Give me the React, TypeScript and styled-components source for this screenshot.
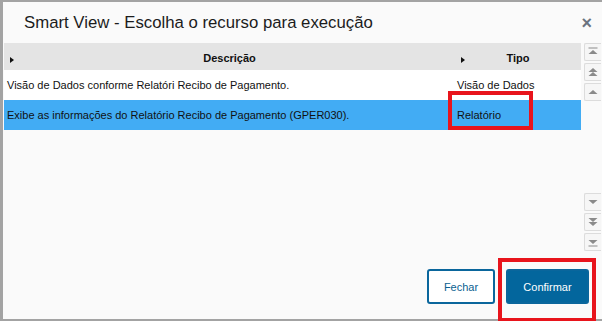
import React from "react";
import styled, { createGlobalStyle } from "styled-components";

const GlobalStyle = createGlobalStyle`
  html, body {
    margin: 0;
    padding: 0;
    background: #ffffff;
    font-family: "Liberation Sans", Arial, sans-serif;
  }
`;

const Dialog = styled.div`
  width: 599px;
  height: 317px;
  display: flex;
  flex-direction: column;
  background: #fafafa;
  border-top: 2px solid #a3a3a3;
  border-left: 3px solid #a3a3a3;
  border-bottom: 2px solid #a3a3a3;
`;

const TitleBar = styled.div`
  height: 41px;
  display: flex;
  align-items: center;
  justify-content: space-between;
  padding: 0 10px 0 21px;
  .title {
    font-size: 16.75px;
    color: #1c1c1c;
    margin-top: 1px;
  }
  .close {
    font-size: 18px;
    font-weight: bold;
    color: #6b7380;
    border: none;
    background: transparent;
    padding: 0;
    line-height: 1;
  }
`;

const Body = styled.div`
  display: flex;
  gap: 3px;
  padding-left: 1px;
  flex: 1;
`;

const Grid = styled.div`
  width: 577px;
  display: flex;
  flex-direction: column;
`;

const Row = styled.div<{ $kind: "head" | "plain" | "selected" }>`
  display: grid;
  grid-template-columns: 451px 126px;
  height: ${(p) => (p.$kind === "head" ? "27px" : "30px")};
  align-items: center;
  font-size: 11px;
  color: #111;
  background: ${(p) =>
    p.$kind === "head" ? "#e4e4e4" : p.$kind === "selected" ? "#42acf4" : "#ffffff"};
  font-weight: ${(p) => (p.$kind === "head" ? "bold" : "normal")};
`;

const HeadCell = styled.div`
  position: relative;
  text-align: center;
  padding-top: 2px;
  &::before {
    content: "";
    position: absolute;
    left: 6px;
    top: 7px;
    border-left: 4px solid #111;
    border-top: 3.5px solid transparent;
    border-bottom: 3.5px solid transparent;
  }
`;

const Cell = styled.div<{ $pad: number }>`
  position: relative;
  padding-left: ${(p) => p.$pad}px;
  white-space: nowrap;
`;

const Highlight = styled.span`
  position: absolute;
  left: -7px;
  top: -18px;
  width: 77px;
  height: 31px;
  border: 4px solid #e8141c;
  pointer-events: none;
`;

const ScrollColumn = styled.div`
  width: 17px;
  display: flex;
  flex-direction: column;
  gap: 92px;
`;

const ScrollGroup = styled.div`
  display: flex;
  flex-direction: column;
  gap: 2px;
`;

const ScrollButton = styled.div`
  width: 16px;
  height: 16px;
  border: 1px solid #dcdcdc;
  border-right: none;
  border-radius: 2px 0 0 2px;
  background: #f6f6f6;
  display: flex;
  align-items: center;
  justify-content: center;
`;

const Footer = styled.div`
  display: flex;
  justify-content: flex-end;
  align-items: flex-start;
  gap: 11px;
  padding: 0 13px 15px 0;
`;

const Button = styled.button<{ $primary?: boolean }>`
  height: 35px;
  border-radius: 3px;
  font-family: "Liberation Sans", Arial, sans-serif;
  font-size: 11px;
  cursor: pointer;
  border: 2px solid #0a669c;
  background: ${(p) => (p.$primary ? "#03669d" : "#ffffff")};
  color: ${(p) => (p.$primary ? "#ffffff" : "#0a5f91")};
  width: ${(p) => (p.$primary ? "83px" : "68px")};
`;

const ButtonWrap = styled.div`
  position: relative;
`;

const ButtonHighlight = styled.span`
  position: absolute;
  left: -8px;
  top: -11px;
  width: 90px;
  height: 56px;
  border: 4px solid #e8141c;
  pointer-events: none;
`;

type ArrowKind = "top" | "pageUp" | "up" | "down" | "pageDown" | "bottom";

function Arrow({ kind }: { kind: ArrowKind }) {
  const up = kind === "top" || kind === "pageUp" || kind === "up";
  const tri = (y: number) =>
    up ? `M1.5 ${y + 4} L6 ${y} L10.5 ${y + 4} Z` : `M1.5 ${y} L6 ${y + 4} L10.5 ${y} Z`;
  return (
    <svg width="12" height="12" viewBox="0 0 12 12">
      {kind === "top" && <rect x="1.5" y="1.5" width="9" height="1" fill="#8a8a8a" />}
      {kind === "bottom" && <rect x="1.5" y="9.5" width="9" height="1" fill="#8a8a8a" />}
      {(kind === "pageUp" || kind === "pageDown") && (
        <>
          <path d={tri(2)} fill="#8a8a8a" />
          <path d={tri(6)} fill="#8a8a8a" />
        </>
      )}
      {kind === "top" && <path d={tri(4)} fill="#8a8a8a" />}
      {kind === "up" && <path d={tri(4)} fill="#8a8a8a" />}
      {kind === "down" && <path d={tri(4)} fill="#8a8a8a" />}
      {kind === "bottom" && <path d={tri(4)} fill="#8a8a8a" />}
    </svg>
  );
}

const rows = [
  { desc: "Visão de Dados conforme Relatóri Recibo de Pagamento.", tipo: "Visão de Dados" },
  { desc: "Exibe as informações do Relatório Recibo de Pagamento (GPER030).", tipo: "Relatório" },
];

export default function App() {
  return (
    <>
      <GlobalStyle />
      <Dialog>
        <TitleBar>
          <span className="title">Smart View - Escolha o recurso para execução</span>
          <button className="close">×</button>
        </TitleBar>
        <Body>
          <Grid>
            <Row $kind="head">
              <HeadCell>Descrição</HeadCell>
              <HeadCell>Tipo</HeadCell>
            </Row>
            {rows.map((r, i) => (
              <Row key={r.desc} $kind={i === 1 ? "selected" : "plain"}>
                <Cell $pad={3}>{r.desc}</Cell>
                <Cell $pad={2}>
                  {r.tipo}
                  {i === 1 && <Highlight />}
                </Cell>
              </Row>
            ))}
          </Grid>
          <ScrollColumn>
            <ScrollGroup>
              <ScrollButton><Arrow kind="top" /></ScrollButton>
              <ScrollButton><Arrow kind="pageUp" /></ScrollButton>
              <ScrollButton><Arrow kind="up" /></ScrollButton>
            </ScrollGroup>
            <ScrollGroup>
              <ScrollButton><Arrow kind="down" /></ScrollButton>
              <ScrollButton><Arrow kind="pageDown" /></ScrollButton>
              <ScrollButton><Arrow kind="bottom" /></ScrollButton>
            </ScrollGroup>
          </ScrollColumn>
        </Body>
        <Footer>
          <Button>Fechar</Button>
          <ButtonWrap>
            <Button $primary>Confirmar</Button>
            <ButtonHighlight />
          </ButtonWrap>
        </Footer>
      </Dialog>
    </>
  );
}
